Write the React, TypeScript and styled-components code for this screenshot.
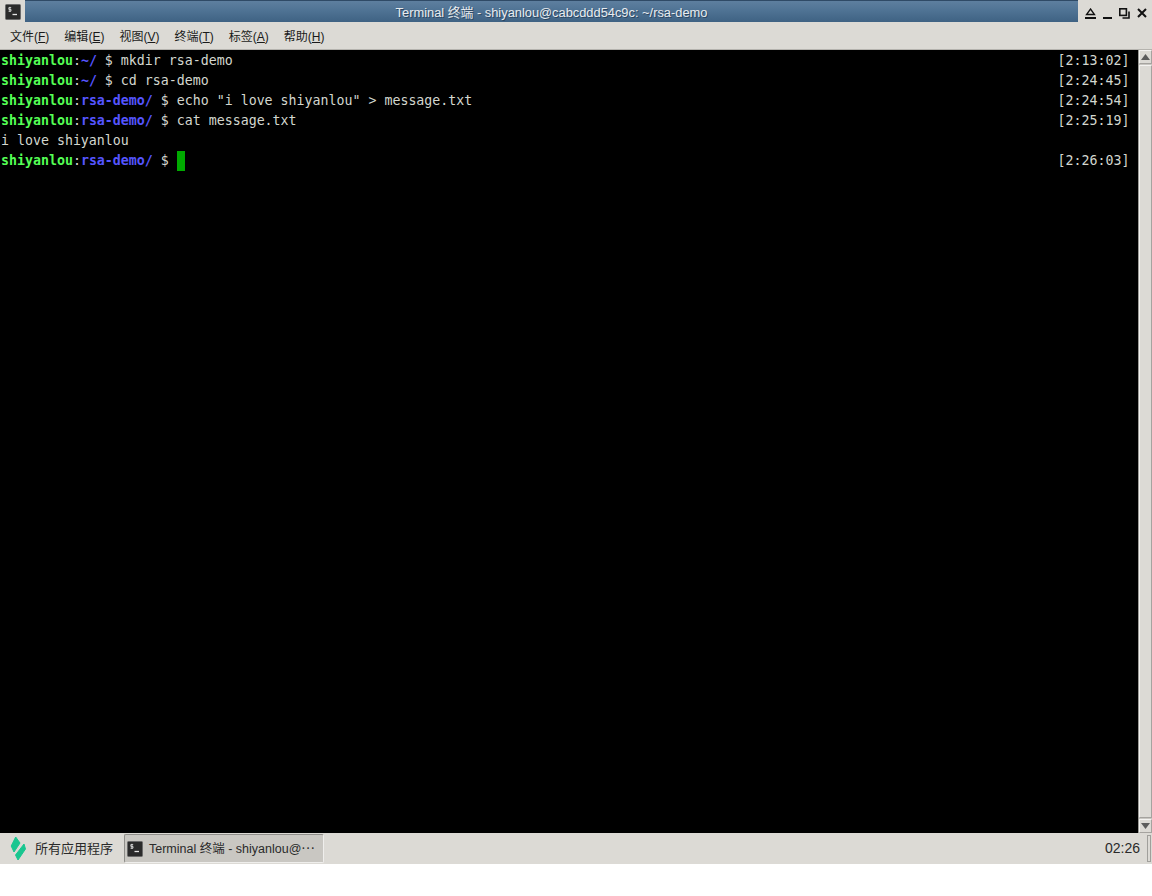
import styled, { createGlobalStyle } from "styled-components";

const GlobalStyle = createGlobalStyle`
  html, body {
    margin: 0;
    padding: 0;
    background: #ffffff;
  }
`;

const Screen = styled.div`
  width: 1152px;
  height: 896px;
  display: flex;
  flex-direction: column;
  overflow: hidden;
  font-family: "Liberation Sans", "Noto Sans CJK SC", sans-serif;
  background: #ffffff;
`;

const TitleBar = styled.div`
  height: 23px;
  flex: none;
  display: flex;
  background: #dcdad5;
`;

const TitleIconBox = styled.div`
  width: 25px;
  height: 24px;
  display: flex;
  align-items: center;
  justify-content: center;
`;

const TitleCenter = styled.div`
  flex: 1;
  height: 22px;
  display: flex;
  align-items: center;
  justify-content: center;
  padding-bottom: 1px;
  box-sizing: border-box;
  color: #e8ecf0;
  font-size: 12.85px;
  border-top: 1px solid #2f4a66;
  background: linear-gradient(to bottom, #5e7f9f 0%, #4f7394 45%, #3f6283 100%);
  text-shadow: 1px 1px 0 #2c4660;
`;

const WindowButtons = styled.div`
  width: 74px;
  display: flex;
  align-items: center;
  gap: 7px;
  box-sizing: border-box;
  padding: 3px 0 0 7px;
`;

const MenuBar = styled.div`
  height: 27px;
  flex: none;
  display: flex;
  align-items: center;
  gap: 15px;
  padding: 0 0 1px 10px;
  box-sizing: border-box;
  background: #dcdad5;
  border-bottom: 1px solid #b5b3ae;
`;

const MenuItem = styled.span`
  font-size: 12px;
  color: #1a1a1a;
  white-space: nowrap;
`;

const Key = styled.span`
  text-decoration: underline;
`;

const TerminalArea = styled.div`
  height: 783px;
  display: flex;
  flex: none;
  background: #dcdad5;
`;

const Output = styled.div`
  flex: 1;
  background: #000000;
  padding-top: 1px;
  box-sizing: border-box;
  font-family: "DejaVu Sans Mono", monospace;
  font-size: 13.28px;
  line-height: 20px;
  color: #d3d7cf;
`;

const Line = styled.div`
  height: 20px;
  display: flex;
  justify-content: space-between;
  padding: 0 8.5px 0 1px;
  white-space: pre;
`;

const User = styled.span`
  color: #55ff55;
  font-weight: bold;
`;

const Path = styled.span`
  color: #5555ff;
  font-weight: bold;
`;

const Cursor = styled.span`
  display: inline-block;
  width: 8px;
  height: 20px;
  vertical-align: top;
  background: #00aa00;
`;

const ScrollBar = styled.div`
  width: 14px;
  flex: none;
  display: flex;
  flex-direction: column;
  box-sizing: border-box;
  background: #c8c6c1;
  border-left: 1px solid #9d9c98;
`;

const ScrollButton = styled.div`
  height: 14px;
  flex: none;
  display: flex;
  align-items: center;
  justify-content: center;
  box-sizing: border-box;
  background: #dcdad5;
  border: 1px solid #f4f3f1;
  border-right-color: #a5a39f;
  border-bottom-color: #a5a39f;
`;

const ScrollThumb = styled.div`
  flex: 1;
  margin: 1px 0;
  box-sizing: border-box;
  background: #dcdad5;
  border: 1px solid #f4f3f1;
  border-right-color: #a5a39f;
  border-bottom-color: #a5a39f;
`;

const TaskBar = styled.div`
  height: 31px;
  flex: none;
  display: flex;
  align-items: center;
  background: #dcdad5;
  font-size: 13px;
  color: #2a2a2a;
`;

const AppMenu = styled.div`
  width: 124px;
  flex: none;
  display: flex;
  align-items: center;
  gap: 9px;
  padding-left: 10px;
  box-sizing: border-box;
`;

const AppLabel = styled.span`
  padding-bottom: 3px;
`;

const TaskButton = styled.div`
  width: 200px;
  height: 29px;
  flex: none;
  display: flex;
  align-items: center;
  gap: 6px;
  padding-left: 2px;
  box-sizing: border-box;
  background: #c9c7c2;
  border: 1px solid #8f8e8a;
  border-right-color: #efeeec;
  border-bottom-color: #efeeec;
  border-radius: 2px;
  white-space: nowrap;
  font-size: 12.5px;
`;

const TaskLabel = styled.span`
  padding-bottom: 2px;
`;

const Ellipsis = styled.span`
  font-family: "Noto Sans CJK SC", sans-serif;
  line-height: 1;
  vertical-align: 4px;
`;

const Clock = styled.div`
  margin-left: auto;
  padding-bottom: 2px;
  font-size: 14px;
`;

const Handle = styled.div`
  width: 4px;
  height: 27px;
  margin: 0 1px 0 7px;
  box-sizing: border-box;
  border: 1px solid #a09f9b;
`;

const TermIcon = ({ size }: { size: number }) => (
  <svg width={size} height={size} viewBox="0 0 16 16">
    <rect x="0.5" y="0.5" width="15" height="15" rx="1" fill="#2b2b2b" stroke="#6b6b6b" />
    <path d="M6.2 3.6 H3.8 V5.4 H6 V7.2 H3.5 M4.9 2.8 V8" stroke="#e6e6e6" strokeWidth="0.8" fill="none" />
    <path d="M7.5 10.5 H12" stroke="#e6e6e6" strokeWidth="1.3" />
  </svg>
);

const LeafLogo = () => (
  <svg width="16" height="25" viewBox="0 0 16 25">
    <path
      d="M5.7 1 L1.2 10 L4 16 L10 7 Z M14 8 L15.5 13 L8 24 L5.5 19 Z"
      fill="#19c690"
      stroke="#19c690"
      strokeLinejoin="round"
    />
  </svg>
);

const ShadeIcon = () => (
  <svg width="11" height="11" viewBox="0 0 11 11">
    <path d="M5.5 1 L9.5 6.5 H1.5 Z" fill="none" stroke="#111" strokeWidth="1.3" />
    <path d="M0 10 H11" stroke="#111" strokeWidth="2" />
  </svg>
);

const MinimizeIcon = () => (
  <svg width="9" height="11" viewBox="0 0 9 11">
    <path d="M0 10 H9" stroke="#111" strokeWidth="2" />
  </svg>
);

const MaximizeIcon = () => (
  <svg width="11" height="11" viewBox="0 0 11 11">
    <rect x="0.8" y="0.8" width="6.6" height="6.6" fill="none" stroke="#111" strokeWidth="1.6" />
    <path d="M10 3.5 V10 H3.5" fill="none" stroke="#111" strokeWidth="1.6" />
  </svg>
);

const CloseIcon = () => (
  <svg width="10" height="10" viewBox="0 0 10 10">
    <path d="M1 1 L9 9 M9 1 L1 9" stroke="#111" strokeWidth="2" />
  </svg>
);

const Arrow = ({ up }: { up?: boolean }) => (
  <svg width="9" height="6" viewBox="0 0 9 6">
    <path d={up ? "M4.5 0 L9 6 H0 Z" : "M0 0 H9 L4.5 6 Z"} fill="#5c5c5c" />
  </svg>
);

const Prompt = ({ path }: { path: string }) => (
  <>
    <User>shiyanlou</User>:<Path>{path}</Path> ${" "}
  </>
);

const menus: [string, string][] = [
  ["文件", "F"],
  ["编辑", "E"],
  ["视图", "V"],
  ["终端", "T"],
  ["标签", "A"],
  ["帮助", "H"],
];

export default function App() {
  return (
    <Screen>
      <GlobalStyle />
      <TitleBar>
        <TitleIconBox>
          <TermIcon size={16} />
        </TitleIconBox>
        <TitleCenter>Terminal 终端 - shiyanlou@cabcddd54c9c: ~/rsa-demo</TitleCenter>
        <WindowButtons>
          <ShadeIcon />
          <MinimizeIcon />
          <MaximizeIcon />
          <CloseIcon />
        </WindowButtons>
      </TitleBar>
      <MenuBar>
        {menus.map(([label, key]) => (
          <MenuItem key={key}>
            {label}(<Key>{key}</Key>)
          </MenuItem>
        ))}
      </MenuBar>
      <TerminalArea>
        <Output>
          <Line>
            <span>
              <Prompt path="~/" />
              mkdir rsa-demo
            </span>
            <span>[2:13:02]</span>
          </Line>
          <Line>
            <span>
              <Prompt path="~/" />
              cd rsa-demo
            </span>
            <span>[2:24:45]</span>
          </Line>
          <Line>
            <span>
              <Prompt path="rsa-demo/" />
              echo "i love shiyanlou" &gt; message.txt
            </span>
            <span>[2:24:54]</span>
          </Line>
          <Line>
            <span>
              <Prompt path="rsa-demo/" />
              cat message.txt
            </span>
            <span>[2:25:19]</span>
          </Line>
          <Line>
            <span>i love shiyanlou</span>
          </Line>
          <Line>
            <span>
              <Prompt path="rsa-demo/" />
              <Cursor />
            </span>
            <span>[2:26:03]</span>
          </Line>
        </Output>
        <ScrollBar>
          <ScrollButton>
            <Arrow up />
          </ScrollButton>
          <ScrollThumb />
          <ScrollButton>
            <Arrow />
          </ScrollButton>
        </ScrollBar>
      </TerminalArea>
      <TaskBar>
        <AppMenu>
          <LeafLogo />
          <AppLabel>所有应用程序</AppLabel>
        </AppMenu>
        <TaskButton>
          <TermIcon size={16} />
          <TaskLabel>
            Terminal 终端 - shiyanlou@<Ellipsis>…</Ellipsis>
          </TaskLabel>
        </TaskButton>
        <Clock>02:26</Clock>
        <Handle />
      </TaskBar>
    </Screen>
  );
}
